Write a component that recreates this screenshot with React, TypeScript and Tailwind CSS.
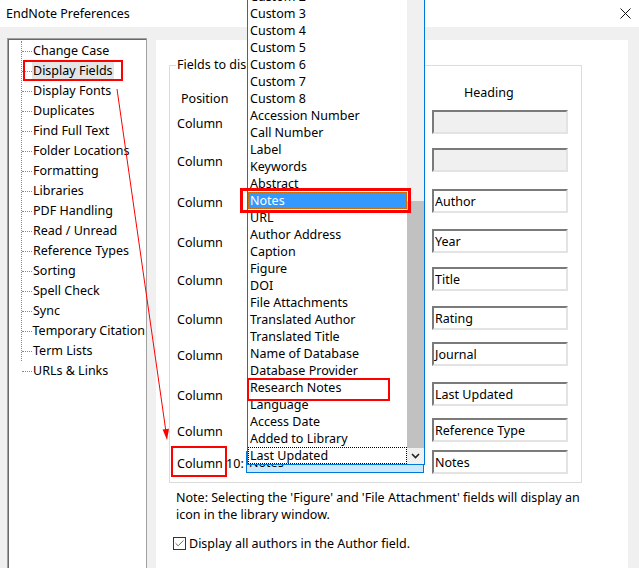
import { Check } from 'lucide-react'

const treeItems = [
  'Change Case',
  'Display Fields',
  'Display Fonts',
  'Duplicates',
  'Find Full Text',
  'Folder Locations',
  'Formatting',
  'Libraries',
  'PDF Handling',
  'Read / Unread',
  'Reference Types',
  'Sorting',
  'Spell Check',
  'Sync',
  'Temporary Citation',
  'Term Lists',
  'URLs & Links',
]

const fieldOptions = [
  'Custom 1',
  'Custom 2',
  'Custom 3',
  'Custom 4',
  'Custom 5',
  'Custom 6',
  'Custom 7',
  'Custom 8',
  'Accession Number',
  'Call Number',
  'Label',
  'Keywords',
  'Abstract',
  'Notes',
  'URL',
  'Author Address',
  'Caption',
  'Figure',
  'DOI',
  'File Attachments',
  'Translated Author',
  'Translated Title',
  'Name of Database',
  'Database Provider',
  'Research Notes',
  'Language',
  'Access Date',
  'Added to Library',
  'Last Updated',
]

// heading per column row, margin above each row
const columns = [
  { heading: '', disabled: true, gap: 'mt-[4px]' },
  { heading: '', disabled: true, gap: 'mt-[14px]' },
  { heading: 'Author', gap: 'mt-[17px]' },
  { heading: 'Year', gap: 'mt-[16px]' },
  { heading: 'Title', gap: 'mt-[14px]' },
  { heading: 'Rating', gap: 'mt-[15px]' },
  { heading: 'Journal', gap: 'mt-[12px]' },
  { heading: 'Last Updated', gap: 'mt-[16px]' },
  { heading: 'Reference Type', gap: 'mt-[12px]' },
  { heading: 'Notes', gap: 'mt-[8px]', last: true },
]

function HeadingBox({ value, disabled }: { value: string; disabled?: boolean }) {
  return (
    <div
      className={`ml-[8px] w-[136px] h-[24px] border-2 border-t-[#7a7a7a] border-l-[#7a7a7a] border-r-[#e3e3e3] border-b-[#e3e3e3] flex items-center pl-[1px] ${
        disabled ? 'bg-[#f0f0f0]' : 'bg-white'
      }`}
    >
      {value}
    </div>
  )
}

export default function App() {
  return (
    <div className="relative w-[639px] h-[568px] overflow-hidden bg-[#f0f0f0] text-[12.5px] leading-[17px] text-black font-['Noto_Sans',sans-serif]">
      {/* title bar */}
      <div className="h-[27px] bg-white flex items-center justify-between pl-[6px] pr-[8px]">
        <span>EndNote Preferences</span>
        <svg width="11" height="11" viewBox="0 0 11 11">
          <path d="M0.5 0.5 L10.5 10.5 M10.5 0.5 L0.5 10.5" stroke="#111" strokeWidth="1" />
        </svg>
      </div>

      <div className="flex pl-[7px] pt-[11px]">
        {/* category tree */}
        <div className="w-[140px] h-[540px] bg-white border border-[#a0a0a0]">
          <div className="h-full border-t border-l border-[#696969]">
            <div className="ml-[12px] mt-[11px] h-[320px] border-l border-dotted border-[#8a8a8a]">
              <ul className="-mt-[10px]">
                {treeItems.map((item) => (
                  <li key={item} className="h-[20px] flex items-center">
                    <span className="w-[10px] border-t border-dotted border-[#8a8a8a]" />
                    <span
                      className={`px-[1px] whitespace-nowrap leading-[18px] ${
                        item === 'Display Fields' ? 'bg-[#e5e5e5]' : ''
                      }`}
                    >
                      {item}
                    </span>
                  </li>
                ))}
              </ul>
            </div>
          </div>
        </div>

        {/* settings page */}
        <div className="ml-[9px] mt-[2px] w-[472px] h-[600px] bg-white">
          <fieldset className="ml-[13px] mt-[16px] w-[413px] border border-[#dcdcdc] pl-[7px] pt-[12px] pb-[8px]">
            <legend className="-ml-[1px] px-[1px] leading-[18px]">Fields to display</legend>
            <div className="h-[20px] flex">
              <span className="pl-[4px] w-[256px] self-end leading-[17px] -mb-[1px]">Position</span>
              <span className="pl-[31px] -mt-[2px]">Heading</span>
            </div>
            {columns.map((col, i) => (
              <div key={i} className={`flex items-center h-[24px] ${col.gap}`}>
                <span className="w-[69px] pt-[2px] whitespace-nowrap">
                  {col.last ? 'Column 10:' : 'Column'}
                </span>
                {col.last ? (
                  <div className="w-[178px] h-[22px] bg-[#cce8ff] border border-[#0078d7] pl-[2px] flex items-center">
                    Notes
                  </div>
                ) : (
                  <div className="w-[178px]" />
                )}
                <HeadingBox value={col.heading} disabled={col.disabled} />
              </div>
            ))}
          </fieldset>

          <p className="ml-[20px] mt-[6px] w-[420px]">
            Note: Selecting the 'Figure' and 'File Attachment' fields will display an icon in the library window.
          </p>

          <label className="ml-[17px] mt-[12px] flex items-center gap-[3px]">
            <span className="w-[13px] h-[13px] border border-[#333] bg-white flex items-center justify-center">
              <Check size={11} strokeWidth={1.6} className="text-[#333]" />
            </span>
            Display all authors in the Author field.
          </label>
        </div>
      </div>

      {/* open dropdown list */}
      <div className="absolute left-[247px] top-[-20px] w-[178px] h-[485px] bg-white border border-[#0078d7] flex">
        <ul className="flex-1 -mt-[10px]">
          {fieldOptions.map((opt) => (
            <li
              key={opt}
              className={`h-[17px] pl-[1px] whitespace-nowrap flex items-center ${
                opt === 'Notes'
                  ? 'bg-[#3399ff] text-white border border-dotted border-[#c86a00]'
                  : opt === 'Last Updated'
                    ? 'border border-dotted border-black'
                    : 'border border-transparent'
              }`}
            >
              {opt}
            </li>
          ))}
        </ul>
        <div className="w-[17px] flex flex-col bg-[#f0f0f0]">
          <div className="h-[220px]" />
          <div className="h-[247px] bg-[#c1c1c1]" />
          <div className="flex-1 flex items-center justify-center">
            <svg width="9" height="6" viewBox="0 0 9 6">
              <path d="M1 1 L4.5 4.5 L8 1" stroke="#222" strokeWidth="1.6" fill="none" />
            </svg>
          </div>
        </div>
      </div>

      {/* red annotations */}
      <div className="absolute left-[23px] top-[60px] w-[100px] h-[21px] border-2 border-[#ff0000]" />
      <div className="absolute left-[240px] top-[188px] w-[171px] h-[25px] border-[3px] border-[#ff0000]" />
      <div className="absolute left-[247px] top-[378px] w-[143px] h-[23px] border-2 border-[#ff0000]" />
      <div className="absolute left-[171px] top-[446px] w-[56px] h-[31px] border-2 border-[#ff0000]" />
      <svg className="absolute left-0 top-0 pointer-events-none" width="639" height="568">
        <line x1="117" y1="89" x2="166" y2="432" stroke="#ff0000" strokeWidth="1" />
        <polygon points="167,440 162.6,429.5 169,428.8" fill="#ff0000" />
      </svg>
    </div>
  )
}
